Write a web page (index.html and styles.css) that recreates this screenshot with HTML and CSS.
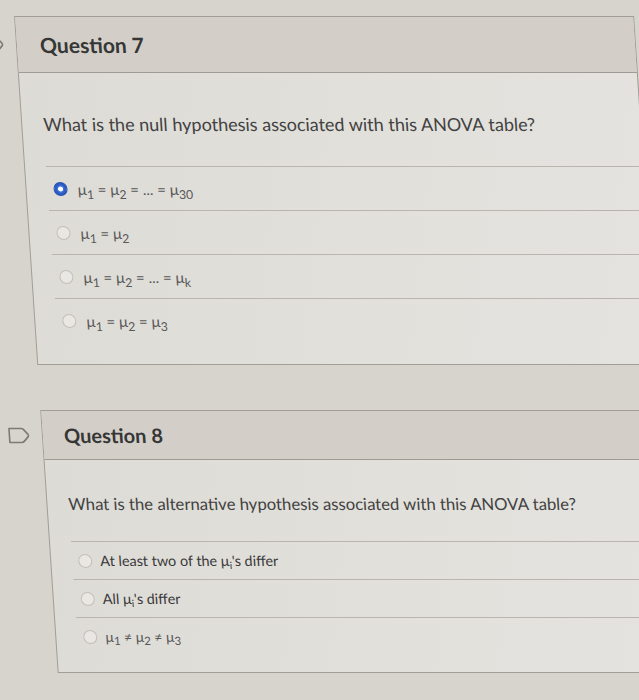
FILE: index.html
```html
<!DOCTYPE html>
<html lang="en">
<head>
<meta charset="utf-8">
<title>Quiz</title>
<link rel="stylesheet" href="styles.css">
</head>
<body>
<div class="page">
  <section class="question q7">
    <div class="flag">
      <svg width="22" height="17" viewBox="0 0 22 17"><path d="M1.5 1.5 H13.5 Q15 1.5 16 2.6 L20.2 7.4 Q21 8.5 20.2 9.6 L16 14.4 Q15 15.5 13.5 15.5 H1.5 Z" fill="none" stroke="#7d7973" stroke-width="1.6" stroke-linejoin="round"/></svg>
    </div>
    <div class="card">
      <div class="head"><h2 class="name">Question 7</h2></div>
      <div class="body">
        <p class="prompt">What is the null hypothesis associated with this ANOVA table?</p>
        <ul class="answers">
          <li class="answer"><span class="radio on"></span><span class="math">μ<sub>1</sub> = μ<sub>2</sub> = ... = μ<sub>30</sub></span></li>
          <li class="answer"><span class="radio"></span><span class="math">μ<sub>1</sub> = μ<sub>2</sub></span></li>
          <li class="answer"><span class="radio"></span><span class="math">μ<sub>1</sub> = μ<sub>2</sub> = ... = μ<sub>k</sub></span></li>
          <li class="answer"><span class="radio"></span><span class="math">μ<sub>1</sub> = μ<sub>2</sub> = μ<sub>3</sub></span></li>
        </ul>
      </div>
    </div>
  </section>

  <section class="question q8">
    <div class="flag">
      <svg width="22" height="17" viewBox="0 0 22 17"><path d="M1.5 1.5 H13.5 Q15 1.5 16 2.6 L20.2 7.4 Q21 8.5 20.2 9.6 L16 14.4 Q15 15.5 13.5 15.5 H1.5 Z" fill="none" stroke="#7d7973" stroke-width="1.6" stroke-linejoin="round"/></svg>
    </div>
    <div class="card">
      <div class="head"><h2 class="name">Question 8</h2></div>
      <div class="body">
        <p class="prompt">What is the alternative hypothesis associated with this ANOVA table?</p>
        <ul class="answers">
          <li class="answer"><span class="radio"></span><span class="label">At least two of the μ<sub class="si">i</sub>'s differ</span></li>
          <li class="answer"><span class="radio"></span><span class="label">All μ<sub class="si">i</sub>'s differ</span></li>
          <li class="answer"><span class="radio"></span><span class="math">μ<sub>1</sub> ≠ μ<sub>2</sub> ≠ μ<sub>3</sub></span></li>
        </ul>
      </div>
    </div>
  </section>
</div>
</body>
</html>
```

FILE: styles.css
```css
html, body {
  margin: 0;
  padding: 0;
}
body {
  width: 639px;
  height: 700px;
  overflow: hidden;
  background: #d7d4ce;
  font-family: Lato, "Open Sans", sans-serif;
  color: #3d3d3d;
}
.page {
  padding-top: 16px;
  transform: skewX(3.8deg);
  transform-origin: 0 0;
}
.question {
  display: flex;
  align-items: flex-start;
  margin-right: 6px;
}
.q8 {
  margin-top: 45px;
}
.flag {
  flex: none;
  width: 22px;
  margin-left: -21px;
  margin-right: 12px;
  display: flex;
  align-items: center;
}
.q7 .flag { height: 57px; }
.q8 .flag { height: 51px; }
.flag svg { display: block; }
.card {
  flex: 1;
  border: 1px solid #a29e97;
  background: linear-gradient(100deg, #dddbd6 0%, #e2e0db 55%, #e4e3df 100%);
}
.head {
  background: #d3cfc8;
  border-bottom: 1px solid #9f9b94;
  display: flex;
  align-items: center;
  padding-left: 23px;
}
.q7 .head { height: 55px; }
.q8 .head { height: 48px; padding-left: 21px; }
.name {
  margin: 0;
  font-size: 21px;
  font-weight: 700;
  color: #363636;
}
.q8 .name { font-size: 20px; }
.body {
  padding-left: 21px;
}
.q7 .body { padding-top: 39px; padding-bottom: 22px; }
.q8 .body { padding-top: 32px; padding-bottom: 17px; }
.prompt {
  margin: 0;
  line-height: 24px;
  color: #424242;
}
.q7 .prompt { font-size: 18px; margin-bottom: 30px; }
.q8 .prompt { font-size: 16.7px; margin-bottom: 25px; }
.answers {
  list-style: none;
  margin: 0;
  padding: 0;
  border-top: 1px solid #b9b5ae;
}
.answer {
  display: flex;
  align-items: center;
  gap: 10px;
  padding-left: 6px;
  border-bottom: 1px solid #b9b5ae;
}
.answer:last-child { border-bottom: none; }
.q7 .answer { height: 43px; }
.q8 .answer { height: 37px; gap: 8px; }
.radio {
  flex: none;
  width: 12px;
  height: 12px;
  border-radius: 50%;
  border: 1px solid #c3bfb8;
  background: #e9e7e3;
}
.radio.on {
  border-color: #244fb0;
  background: radial-gradient(circle, #ffffff 0 2.2px, #3e72d6 2.8px 3.6px, #2c5cc4 4.2px);
}
.math {
  font-size: 15px;
  color: #585858;
}
.q8 .math { font-size: 14px; }
.math sub {
  font-size: 0.82em;
  vertical-align: -0.3em;
  line-height: 0;
}
.label {
  font-size: 14.4px;
  color: #393939;
}
.label .si {
  font-size: 0.7em;
  vertical-align: -0.25em;
  line-height: 0;
}
```
